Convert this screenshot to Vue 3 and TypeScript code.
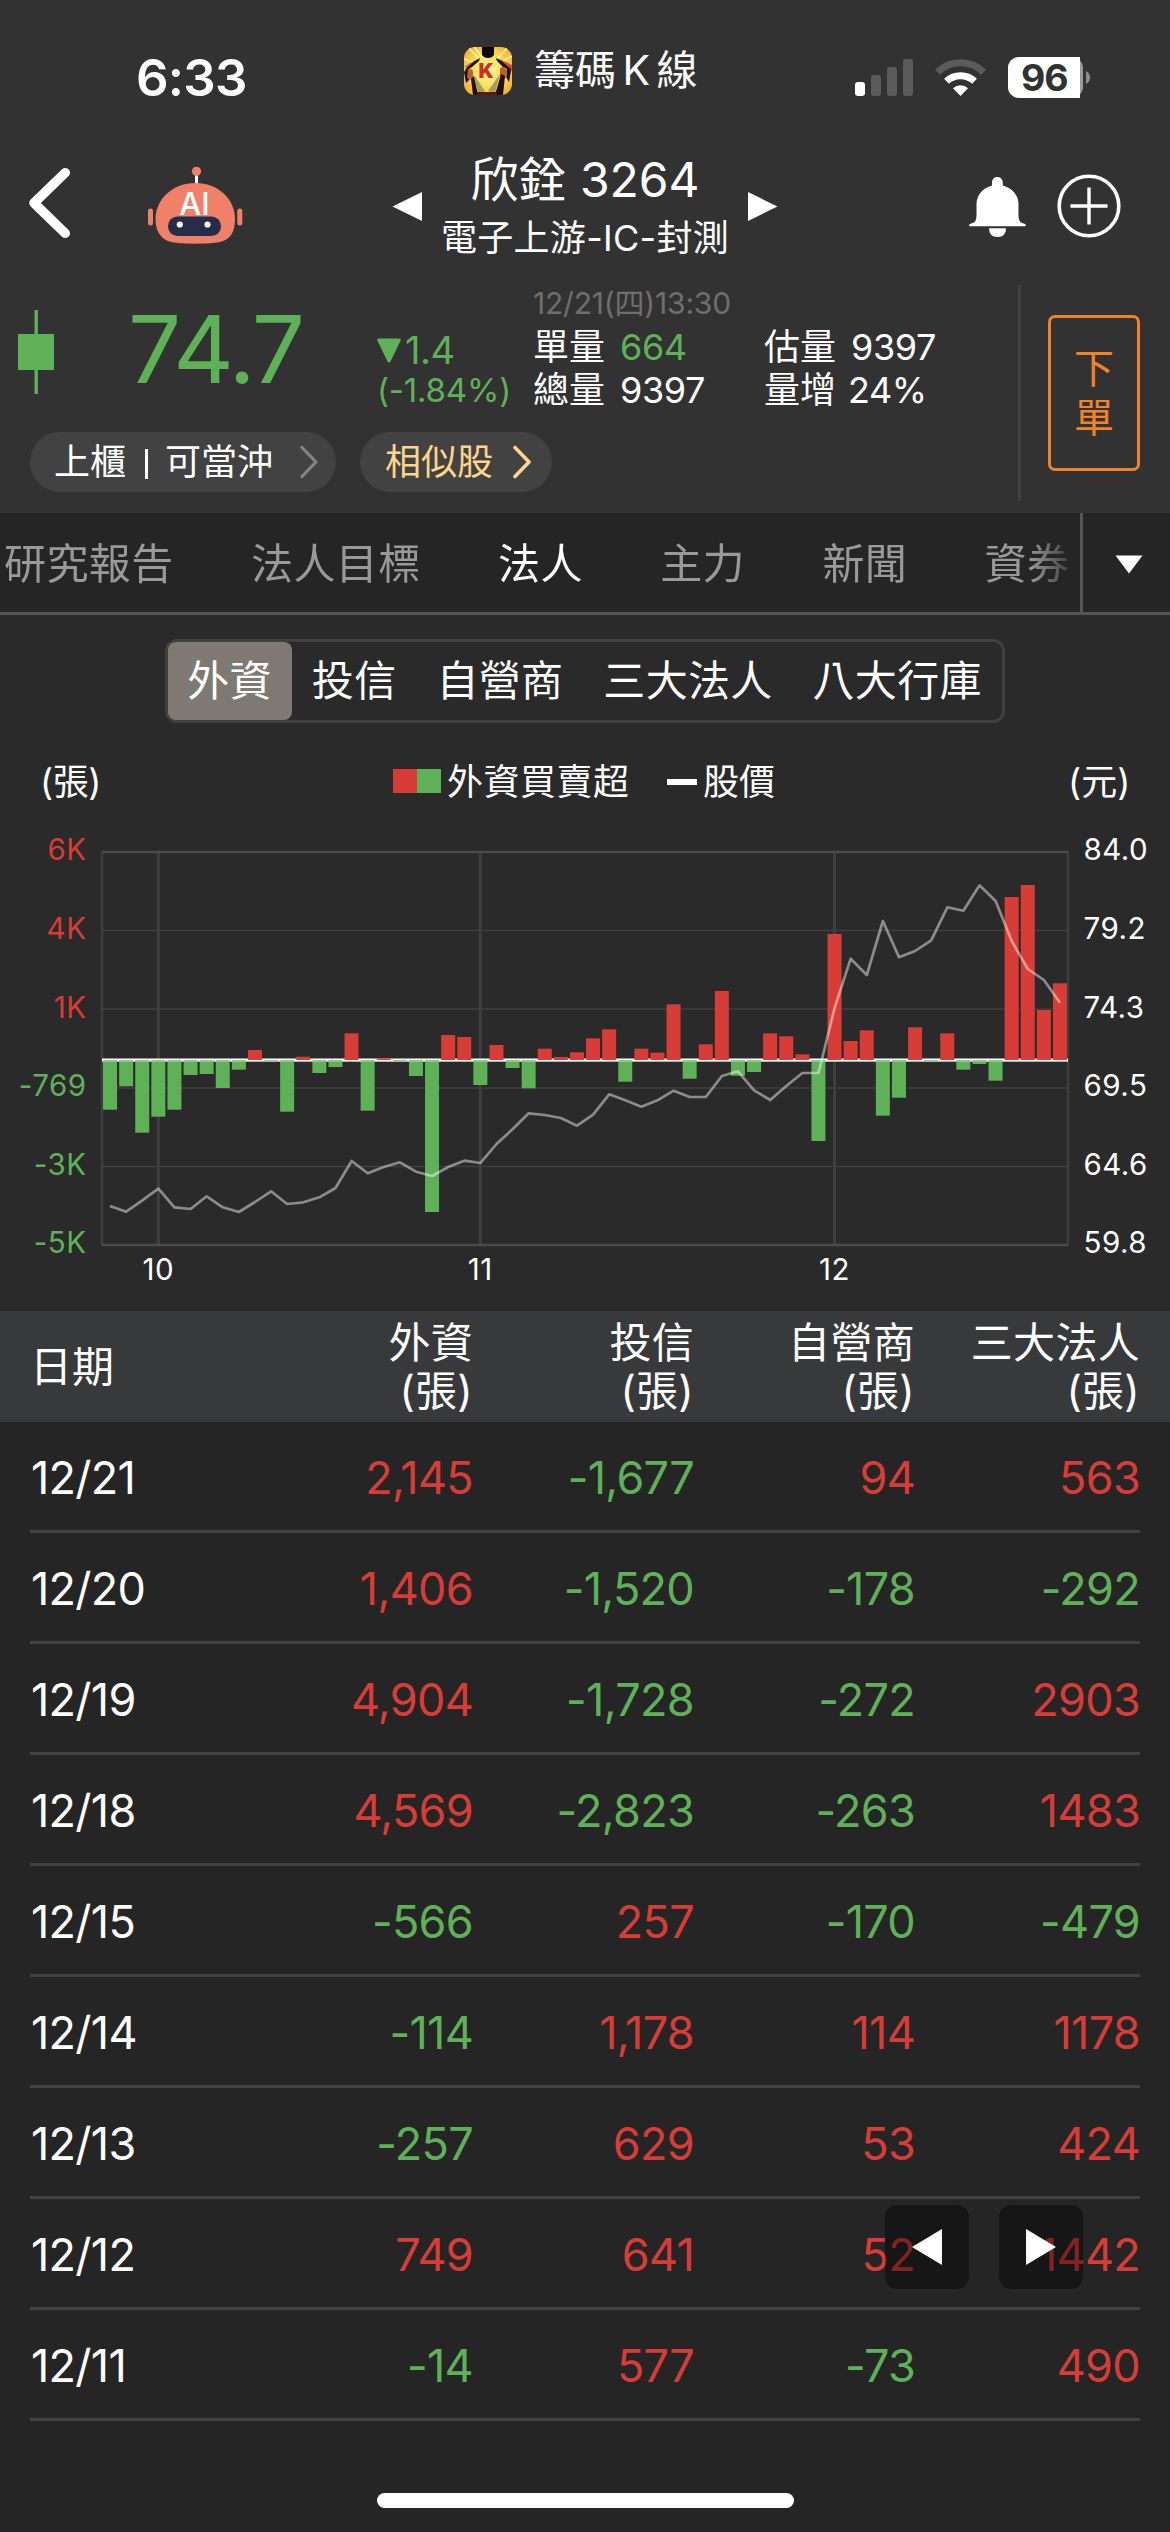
<script setup lang="ts">
interface Row {
  date: string
  values: string[]
}

const tabs: string[] = ['研究報告', '法人目標', '法人', '主力', '新聞', '資券']
const activeTab = '法人'

const segments: string[] = ['外資', '投信', '自營商', '三大法人', '八大行庫']
const activeSegment = '外資'

const columns: string[] = ['外資', '投信', '自營商', '三大法人']

const rows: Row[] = [
  { date: '12/21', values: ['2,145', '-1,677', '94', '563'] },
  { date: '12/20', values: ['1,406', '-1,520', '-178', '-292'] },
  { date: '12/19', values: ['4,904', '-1,728', '-272', '2903'] },
  { date: '12/18', values: ['4,569', '-2,823', '-263', '1483'] },
  { date: '12/15', values: ['-566', '257', '-170', '-479'] },
  { date: '12/14', values: ['-114', '1,178', '114', '1178'] },
  { date: '12/13', values: ['-257', '629', '53', '424'] },
  { date: '12/12', values: ['749', '641', '52', '1442'] },
  { date: '12/11', values: ['-14', '577', '-73', '490'] },
]

// Chart geometry
const left = 102
const right = 1068
const top = 852
const bottom = 1245
const zero = 1060
const step = (right - left) / 60

const gridY: number[] = [930.5, 1009, 1088, 1166.5]
const months = [
  { label: '10', index: 3 },
  { label: '11', index: 23 },
  { label: '12', index: 45 },
]
const leftAxis: string[] = ['6K', '4K', '1K', '-769', '-3K', '-5K']
const rightAxis: string[] = ['84.0', '79.2', '74.3', '69.5', '64.6', '59.8']

// Bar heights: positive = net buy, negative = net sell
const bars: number[] = [
  -49.7, -26.3, -72.7, -56.7, -49.7, -15, -14, -28, -9.7, 10,
  -1, -51.7, 3.3, -13, -7, 26.7, -50.7, 1.5, -1, -16,
  -152, 25, 23, -25, 15, -8, -28.3, 11.3, 3, 7.7,
  21.7, 30.7, -21.7, 11.3, 7.3, 55.7, -18.7, 15.7, 69, -15.7,
  -12, 26.7, 23.7, 5.7, -81, 126, 19, 29.7, -55.7, -37.7,
  32.7, -1, 26.7, -9.7, -4, -20.7, 163, 175, 50, 76.7,
]

const price: number[] = [
  1206, 1211.7, 1200.3, 1188.7, 1207.3, 1209, 1196.3, 1207.3, 1212, 1202,
  1191.3, 1204, 1202.3, 1197.3, 1188, 1161, 1173.3, 1167, 1162.3, 1171.7,
  1176, 1167, 1160.7, 1163, 1144, 1129.3, 1113.3, 1115, 1118, 1125.7,
  1114.7, 1094.3, 1100.3, 1106.7, 1100.3, 1090.7, 1097, 1097, 1076, 1071.3,
  1090.3, 1100, 1086, 1073, 1073, 1008, 958.7, 975, 921, 957.3,
  951, 940.3, 907.3, 910.7, 885.3, 901, 941, 969, 980, 1002.7,
]

const centerX = (i: number): number => left + step * (i + 0.5)
const labelY = (i: number): number => top + i * 78.6 - 2.3
const pricePoints: string = price.map((y, i) => `${centerX(i).toFixed(1)},${y}`).join(' ')
const tone = (v: string): string => (v.startsWith('-') ? 'down' : 'up')
</script>

<template>
  <div class="app">
    <header class="status">
      <span class="time">6:33</span>
      <svg class="app-icon" viewBox="0 0 48 48" width="48" height="48">
        <defs>
          <clipPath id="iconClip"><rect width="48" height="48" rx="11" /></clipPath>
          <radialGradient id="iconGlow" cx=".5" cy=".5" r=".65">
            <stop offset="0" stop-color="#fff6a0" />
            <stop offset=".55" stop-color="#fbdc55" />
            <stop offset="1" stop-color="#efa92e" />
          </radialGradient>
        </defs>
        <g clip-path="url(#iconClip)">
          <rect width="48" height="48" fill="url(#iconGlow)" />
          <path d="M4 0L16 13M0 12L13 17M44 0L33 12M10 0L18 10M48 9L37 15" stroke="#fff3a8" stroke-width="1.6" />
          <path d="M18 0H30V8Q28 11 24 11Q20 11 18 8Z" fill="#0b0806" />
          <path d="M16 11L5 17L0 25L8 20L15 14Z" fill="#1a0f12" />
          <path d="M32 11L45 17L48 24L39 20L33 14Z" fill="#1a0f12" />
          <path d="M0 20L11 14L4 20ZM35 12L48 18V23Z" fill="#e0452f" />
          <path d="M0 25L5 22V33L2 36Z" fill="#1a0f12" />
          <path d="M43 20L47 24L45 35L42 30Z" fill="#1a0f12" />
          <path d="M4 23Q9 20 9 26V31Q5 35 3 30Z" fill="#b9622f" />
          <path d="M36 21Q41 18 43 24V30Q38 34 36 29Z" fill="#b9622f" />
          <path d="M7 32L10 29L14 48H9Z" fill="#2a0d14" />
          <path d="M41 29L37 27L31 48H39Z" fill="#2a0d14" />
          <path d="M10 28L21 44L14 47Z" fill="#a3a05e" />
          <path d="M36 27L24 44L31 46Z" fill="#a3a05e" />
          <path d="M13 45H33V48H13Z" fill="#5c1716" />
          <text x="22.200" y="31" text-anchor="middle" class="icon-k">K</text>
        </g>
      </svg>
      <span class="app-name">籌碼 K 線</span>
      <svg class="signals" viewBox="850 47 260 60" width="260" height="60">
        <rect x="856" y="82" width="10" height="14" rx="3" fill="#fff" />
        <g fill="#5b5b5b">
          <rect x="872" y="75" width="10" height="21" rx="3" />
          <rect x="888" y="67" width="10" height="29" rx="3" />
          <rect x="904" y="59" width="10" height="37" rx="3" />
        </g>
        <path d="M938.5 72.2A33 33 0 0 1 984.5 72.2" fill="none" stroke="#5b5b5b" stroke-width="7" />
        <path d="M947.5 81.2A20.5 20.5 0 0 1 975.5 81.2" fill="none" stroke="#fff" stroke-width="7" />
        <path d="M961.5 96L954 88.3A11 11 0 0 1 969 88.3Z" fill="#fff" />
        <rect x="1009" y="57" width="75" height="41" rx="11" fill="#9a9a9a" />
        <path d="M1020 57H1081V98H1020A11 11 0 0 1 1009 87V68A11 11 0 0 1 1020 57Z" fill="#fff" />
        <path d="M1087 71Q1091 73 1091 77.500Q1091 82 1087 84Z" fill="#8c8c8c" />
        <text x="1045.300" y="91.300" text-anchor="middle" class="battery">96</text>
      </svg>
    </header>

    <nav class="nav">
      <svg viewBox="0 150 110 118" width="110" height="118">
        <path d="M65.300 172.700L34 203L65.300 233.300" fill="none" stroke="#fff" stroke-width="9.500" stroke-linecap="round" stroke-linejoin="round" />
      </svg>
      <svg viewBox="110 150 180 118" width="180" height="118">
        <rect x="195" y="174" width="3" height="12" fill="#fff" />
        <circle cx="196.500" cy="171.300" r="4.600" fill="#ef8168" />
        <rect x="148" y="208.500" width="5" height="17" rx="2.500" fill="#ef8168" />
        <rect x="237.300" y="208.500" width="5" height="17" rx="2.500" fill="#ef8168" />
        <path d="M195.500 183C218 183 235 199 235 219C235 235 228 241.500 215 242.800C203 244 188 244 176 242.800C163 241.500 155.500 234 155.500 219C155.500 199 173 183 195.500 183Z" fill="#ef8168" />
        <rect x="168" y="216.500" width="53" height="19.500" rx="9.500" fill="#272c49" />
        <circle cx="179.800" cy="224.500" r="3.100" fill="#fff" />
        <circle cx="207.500" cy="224.500" r="3.100" fill="#fff" />
        <text x="194.500" y="214.500" text-anchor="middle" class="robot-label">AI</text>
      </svg>
      <svg viewBox="290 150 142 118" width="142" height="118">
        <path d="M392.500 206.500L422 192V221Z" fill="#fff" />
      </svg>
      <div class="title">
        <div class="name">欣銓 3264</div>
        <div class="industry">電子上游-IC-封測</div>
      </div>
      <svg viewBox="738 150 142 118" width="142" height="118">
        <path d="M777.500 206.500L748 192V221Z" fill="#fff" />
      </svg>
      <svg viewBox="880 150 290 118" width="290" height="118">
        <path d="M997.300 177C1000.800 177 1002.800 179.500 1002.800 182.500V185.500C1012 188 1018.500 195 1018.500 204C1018.500 213 1018 219 1020 221.500C1021.500 223.500 1026 223.500 1026 225.200Q1026 226.300 1024.500 226.300H970Q969 226.300 969 225.200C969 223.500 973.500 223.500 975 221.500C977 219 976.500 213 976.500 204C976.500 195 983 188 992 185.500V182.500C992 179.500 993.800 177 997.300 177Z" fill="#fff" />
        <path d="M989 228.300H1006Q1006 237 997.500 237Q989 237 989 228.300Z" fill="#fff" />
        <circle cx="1089" cy="206" r="29.800" fill="none" stroke="#fff" stroke-width="3.600" />
        <path d="M1070.500 206H1107.500M1089 187.500V224.500" stroke="#fff" stroke-width="3.400" />
      </svg>
    </nav>

    <section class="quote">
      <div class="quote-main">
        <div class="quote-top">
          <svg viewBox="0 268 110 164" width="110" height="164">
            <path d="M36.200 310V394" stroke="#5fb158" stroke-width="3.400" />
            <rect x="18" y="334" width="36" height="36" fill="#5fb158" />
          </svg>
          <div class="last">74.7</div>
          <div class="change">
            <div class="diff">
              <svg viewBox="0 0 24 25" width="24" height="25"><path d="M2 .5H22Q24.500 .5 23.500 2.800L13.500 23.500Q12 25.500 10.500 23.500L.5 2.800Q-.5 .5 2 .5Z" fill="#5fb158" /></svg>
              <span>1.4</span>
            </div>
            <div class="pct">(-1.84%)</div>
          </div>
          <div class="info">
            <div class="stamp">12/21(四)13:30</div>
            <div class="info-row"><span class="k">單量</span><span class="v green">664</span><span class="k">估量</span><span>9397</span></div>
            <div class="info-row"><span class="k">總量</span><span class="v">9397</span><span class="k k-near">量增</span><span>24%</span></div>
          </div>
        </div>
        <div class="chips">
          <div class="chip chip-market">
            <span>上櫃</span><i class="bar"></i><span>可當沖</span>
            <svg viewBox="0 0 18 34" width="18" height="34"><path d="M2 2.500L16 17L2 31.500" fill="none" stroke="#858585" stroke-width="3.200" stroke-linecap="round" stroke-linejoin="round" /></svg>
          </div>
          <div class="chip chip-similar">
            <span>相似股</span>
            <svg viewBox="0 0 18 34" width="18" height="34"><path d="M2 2.500L16 17L2 31.500" fill="none" stroke="#fbd58c" stroke-width="3.600" stroke-linecap="round" stroke-linejoin="round" /></svg>
          </div>
        </div>
      </div>
      <div class="order"><button class="order-btn"><span>下</span><span>單</span></button></div>
    </section>

    <div class="tabs">
      <div class="tab-list">
        <span v-for="t in tabs" :key="t" :class="{ on: t === activeTab }">{{ t }}</span>
      </div>
      <div class="tab-more">
        <svg viewBox="0 0 28 19" width="28" height="19"><path d="M.5 .5H27.500L14 18.500Z" fill="#fff" /></svg>
      </div>
    </div>

    <section class="panel">
      <div class="segment">
        <span v-for="s in segments" :key="s" :class="{ on: s === activeSegment }">{{ s }}</span>
      </div>
      <div class="legend">
        <span class="unit">(張)</span>
        <span class="legend-mid">
          <i class="sq red-bg"></i><i class="sq green-bg"></i><span class="lg">外資買賣超</span>
          <i class="dash"></i><span class="lg2">股價</span>
        </span>
        <span>(元)</span>
      </div>
      <svg class="chart" viewBox="0 812 1170 499" width="1170" height="499">
        <g stroke="#3f3f3f" fill="none">
          <path v-for="y in gridY" :key="y" :d="`M${left} ${y}H${right}`" stroke-width="1.500" />
          <path v-for="m in months" :key="m.label" :d="`M${centerX(m.index)} ${top}V${bottom}`" stroke-width="3" />
          <path :d="`M${left} ${top}V${bottom}M${right} ${top}V${bottom}`" stroke-width="2.500" />
          <path :d="`M${left} ${top}H${right}M${left} ${bottom}H${right}`" stroke="#4b4b4b" stroke-width="2.500" />
        </g>
        <path :d="`M${left} ${zero}H${right}`" stroke="#fff" stroke-width="3" />
        <rect
          v-for="(b, i) in bars"
          :key="i"
          :x="centerX(i) - 7"
          :y="b > 0 ? zero - b : zero"
          width="14"
          :height="Math.abs(b)"
          :fill="b > 0 ? '#d83c37' : '#5fb158'"
        />
        <path :d="`M${left} ${zero + 1}H${right}`" stroke="#fff" stroke-opacity=".6" stroke-width="1" />
        <polyline :points="pricePoints" fill="none" stroke="#fff" stroke-opacity=".46" stroke-width="2.700" stroke-linejoin="round" />
        <g class="axis">
          <text v-for="(l, i) in leftAxis" :key="l" x="86.500" :y="labelY(i) + 10.700" text-anchor="end" :fill="i < 3 ? '#d83c37' : '#5fb158'">{{ l }}</text>
          <text v-for="(l, i) in rightAxis" :key="l" x="1083.500" :y="labelY(i) + 10.700" fill="#fff">{{ l }}</text>
          <text v-for="m in months" :key="m.label" :x="centerX(m.index)" y="1280" text-anchor="middle" fill="#fff">{{ m.label }}</text>
        </g>
      </svg>
    </section>

    <section class="table">
      <div class="thead">
        <div class="date">日期</div>
        <div v-for="c in columns" :key="c" class="cell"><div>{{ c }}</div><div>(張)</div></div>
      </div>
      <div v-for="r in rows" :key="r.date" class="row">
        <div class="date">{{ r.date }}</div>
        <div v-for="(v, i) in r.values" :key="i" class="cell" :class="tone(v)">{{ v }}</div>
      </div>
    </section>

    <div class="floaters">
      <button><svg viewBox="0 0 30 36" width="30" height="36"><path d="M0 18L30 0V36Z" fill="#fff" /></svg></button>
      <button><svg viewBox="0 0 30 36" width="30" height="36"><path d="M30 18L0 0V36Z" fill="#fff" /></svg></button>
    </div>
    <div class="home"></div>
  </div>
</template>

<style>
body {
  margin: 0;
  background: #252525;
}
</style>

<style scoped>
.app {
  position: relative;
  width: 1170px;
  height: 2532px;
  overflow: hidden;
  background: #252525;
  color: #fff;
  font-family: Inter, 'Noto Sans CJK TC', sans-serif;
  font-size: 42px;
  white-space: nowrap;
}
svg {
  display: block;
  flex: none;
}
button {
  font: inherit;
  padding: 0;
}
.status {
  display: flex;
  align-items: flex-start;
  box-sizing: border-box;
  height: 150px;
  padding: 47px 0 0 136px;
  background: #323232;
}
.time {
  width: 328px;
  line-height: 62px;
  font-size: 51px;
  font-weight: 600;
  letter-spacing: -0.8px;
}
.icon-k {
  font-size: 20px;
  font-weight: 900;
  fill: #c9302a;
}
.app-name {
  width: 315px;
  margin-left: 22px;
  line-height: 46px;
  font-size: 41px;
  word-spacing: -5px;
}
.battery {
  font-size: 37.5px;
  font-weight: 700;
  fill: #323232;
  letter-spacing: -1px;
}
.nav {
  display: flex;
  height: 118px;
  background: #323232;
}
.robot-label {
  font-size: 31px;
  font-weight: 500;
  fill: #fff;
}
.title {
  width: 306px;
  text-align: center;
  line-height: 59px;
}
.name {
  font-size: 48px;
}
.industry {
  font-size: 36px;
  letter-spacing: 0.3px;
}
.quote {
  display: flex;
  height: 245px;
  background: #323232;
}
.quote-main {
  width: 1018px;
}
.quote-top {
  display: flex;
  height: 164px;
}
.last {
  width: 249px;
  padding-left: 18px;
  line-height: 162px;
  font-size: 94px;
  letter-spacing: -2.4px;
  color: #5fb158;
}
.change {
  width: 156px;
  padding-top: 62px;
  line-height: 40px;
  color: #5fb158;
}
.diff {
  display: flex;
  align-items: center;
  gap: 4px;
  font-size: 38px;
  letter-spacing: -0.5px;
}
.pct {
  font-size: 33px;
  letter-spacing: -0.2px;
}
.info {
  padding-top: 14px;
  line-height: 43px;
  font-size: 36px;
}
.stamp {
  margin-bottom: 1px;
  font-size: 30px;
  letter-spacing: -0.2px;
  color: #6e6e6e;
}
.info-row {
  display: flex;
  letter-spacing: -0.4px;
}
.k {
  width: 87px;
  letter-spacing: 0;
}
.k-near {
  width: 84px;
}
.v {
  width: 144px;
}
.green {
  color: #5fb158;
}
.chips {
  display: flex;
  gap: 24px;
  padding-left: 30px;
}
.chip {
  display: flex;
  align-items: center;
  box-sizing: border-box;
  height: 60px;
  border-radius: 30px;
  background: #424242;
  font-size: 36px;
  line-height: 60px;
}
.chip-market {
  width: 306px;
  padding-left: 24px;
}
.bar {
  width: 3px;
  height: 30px;
  margin: 4px 17px 0 19px;
  background: #fff;
}
.chip-market svg {
  margin-left: 27px;
}
.chip-similar {
  width: 192px;
  padding-left: 25px;
  color: #fbd58c;
}
.chip-similar svg {
  margin-left: 20px;
}
.order {
  width: 122px;
  height: 216px;
  margin-top: 17px;
  border-left: 3px solid #404040;
  box-sizing: border-box;
  padding: 30px 0 0 27px;
}
.order-btn {
  display: flex;
  flex-direction: column;
  align-items: center;
  justify-content: center;
  box-sizing: border-box;
  width: 92px;
  height: 156px;
  border: 3px solid #f0822c;
  border-radius: 7px;
  background: none;
  color: #f0822c;
  font-size: 40px;
  line-height: 49px;
}
.tabs {
  display: flex;
  height: 99px;
  border-bottom: 3px solid #565656;
  background: #252525;
}
.tab-list {
  display: flex;
  gap: 77.4px;
  width: 1076px;
  padding-left: 4px;
  overflow: hidden;
  line-height: 102px;
  letter-spacing: 0.4px;
  color: #999;
  -webkit-mask-image: linear-gradient(to right, #000 1030px, transparent 1082px);
  mask-image: linear-gradient(to right, #000 1030px, transparent 1082px);
}
.tab-list span {
  flex: none;
}
.tab-list .on {
  color: #fff;
}
.tab-more {
  display: flex;
  align-items: center;
  width: 87px;
  padding: 3px 0 0 0;
  box-sizing: border-box;
  border-left: 3px solid #565656;
}
.tab-more svg {
  margin-left: 32px;
}
.panel {
  display: flex;
  flex-direction: column;
  height: 696px;
  background: #2a2a2a;
}
.segment {
  display: flex;
  align-self: center;
  box-sizing: border-box;
  height: 84px;
  margin: 24px 0 29px;
  border: 3px solid #404040;
  border-radius: 12px;
  line-height: 78px;
}
.segment span {
  padding: 0 20px;
  border-radius: 8px;
  letter-spacing: 0.3px;
}
.segment .on {
  padding: 0 20px 0 19px;
  background: #7f7974;
}
.legend {
  display: flex;
  height: 60px;
  line-height: 60px;
  font-size: 36px;
}
.unit {
  width: 353px;
  padding-left: 40px;
  letter-spacing: -0.4px;
}
.legend-mid {
  display: flex;
  align-items: center;
  width: 675px;
}
.sq {
  width: 24px;
  height: 24px;
  margin-top: -2px;
}
.red-bg {
  background: #d83c37;
}
.green-bg {
  background: #5fb158;
}
.lg {
  width: 220px;
  margin-left: 6px;
  letter-spacing: 0.5px;
}
.dash {
  width: 30px;
  height: 6px;
  margin-right: 6px;
  background: #fff;
}
.axis {
  font-size: 29.5px;
  letter-spacing: 0.5px;
}
.thead,
.row {
  display: grid;
  grid-template-columns: 222px 221px 221px 221px 225px;
  padding: 0 30px;
  align-items: center;
}
.cell {
  text-align: right;
}
.thead {
  height: 111px;
  background: #38393b;
  line-height: 48px;
}
.thead .cell {
  letter-spacing: 0.3px;
}
.row {
  height: 108px;
  margin: 0 30px;
  padding: 0;
  border-bottom: 3px solid #424242;
  font-size: 45px;
  line-height: 112px;
  letter-spacing: -0.7px;
}
.row .date {
  padding-left: 1px;
}
.up {
  color: #d83c37;
}
.down {
  color: #5fb158;
}
.floaters {
  position: absolute;
  left: 885px;
  top: 2205px;
  display: flex;
  gap: 30px;
}
.floaters button {
  display: flex;
  align-items: center;
  justify-content: center;
  width: 84px;
  height: 84px;
  border: 0;
  border-radius: 12px;
  background: rgba(0, 0, 0, 0.4);
}
.home {
  position: absolute;
  left: 377px;
  top: 2493px;
  width: 417px;
  height: 15px;
  border-radius: 8px;
  background: #fff;
}
</style>
